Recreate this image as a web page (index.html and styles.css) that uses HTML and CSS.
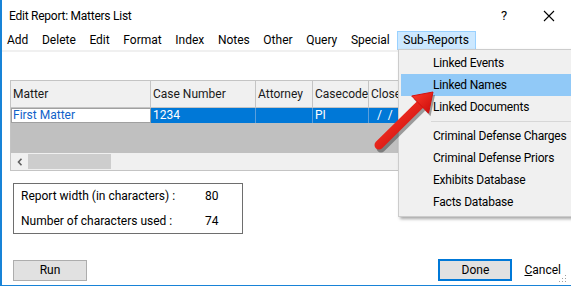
FILE: index.html
```html
<!DOCTYPE html>
<html>
<head>
<meta charset="utf-8">
<link rel="stylesheet" href="styles.css">
</head>
<body>
<div class="window">
  <div class="titlebar">
    <span class="title">Edit Report: Matters List</span>
    <span class="tb-help">?</span>
    <span class="tb-close">
      <svg width="12" height="12" viewBox="0 0 12 12"><path d="M1 1 L11 11 M11 1 L1 11" stroke="#000" stroke-width="1.1" fill="none"/></svg>
    </span>
  </div>
  <div class="menubar">
    <span class="mi mi-add">Add</span>
    <span class="mi">Delete</span>
    <span class="mi">Edit</span>
    <span class="mi">Format</span>
    <span class="mi">Index</span>
    <span class="mi">Notes</span>
    <span class="mi">Other</span>
    <span class="mi">Query</span>
    <span class="mi">Special</span>
    <span class="mi mi-open">Sub-Reports</span>
  </div>
  <div class="menusep"></div>

  <div class="grid">
    <div class="grow ghead">
      <div class="c c1">Matter</div>
      <div class="c c2">Case Number</div>
      <div class="c c3">Attorney</div>
      <div class="c c4">Casecode</div>
      <div class="c c5">Close</div>
    </div>
    <div class="grow gdata">
      <div class="c c1 cur">First Matter</div>
      <div class="c c2 sel">1234</div>
      <div class="c c3 sel"></div>
      <div class="c c4 sel">PI</div>
      <div class="c c5 sel">&nbsp;&nbsp;/&nbsp;&nbsp;/</div>
    </div>
    <div class="gempty"></div>
    <div class="hscroll">
      <span class="sarrow">
        <svg width="6" height="8" viewBox="0 0 6 8"><path d="M4.5 0.8 L1.5 4 L4.5 7.2" stroke="#606060" stroke-width="1.6" fill="none"/></svg>
      </span>
      <span class="thumb"></span>
    </div>
  </div>

  <div class="info">
    <div class="irow"><span class="ilabel">Report width (in characters) :</span><span class="ival">80</span></div>
    <div class="irow"><span class="ilabel">Number of characters used :</span><span class="ival">74</span></div>
  </div>

  <div class="buttons">
    <button class="btn">Run</button>
    <span class="spacer"></span>
    <button class="btn btn-default">Done</button>
    <span class="cancel"><u>C</u>ancel</span>
  </div>
  <span class="grip">
    <svg width="8" height="8" viewBox="0 0 8 8" fill="#a0a0a0"><rect x="6" y="0" width="1" height="1"/><rect x="3" y="3" width="1" height="1"/><rect x="6" y="3" width="1" height="1"/><rect x="0" y="6" width="1" height="1"/><rect x="3" y="6" width="1" height="1"/><rect x="6" y="6" width="1" height="1"/></svg>
  </span>

  <div class="popup">
    <div class="pi">Linked Events</div>
    <div class="pi hot">Linked Names</div>
    <div class="pi">Linked Documents</div>
    <div class="psep"></div>
    <div class="pi">Criminal Defense Charges</div>
    <div class="pi">Criminal Defense Priors</div>
    <div class="pi">Exhibits Database</div>
    <div class="pi">Facts Database</div>
  </div>

  <svg class="arrow" width="571" height="286" viewBox="0 0 571 286">
    <defs>
      <linearGradient id="rg" x1="0" y1="0" x2="1" y2="1">
        <stop offset="0" stop-color="#ff3b2a"/>
        <stop offset="1" stop-color="#c80a0a"/>
      </linearGradient>
    </defs>
    <g opacity="0.35" transform="translate(2,3)">
      <line x1="379" y1="145" x2="420" y2="104.6" stroke="#000" stroke-width="9" stroke-linecap="round"/>
      <polygon points="433,92 428.5,113.2 411.7,96" fill="#000"/>
    </g>
    <line x1="379" y1="145" x2="420" y2="104.6" stroke="url(#rg)" stroke-width="9" stroke-linecap="round"/>
    <polygon points="433,92 428.5,113.2 411.7,96" fill="url(#rg)" stroke="#d41010" stroke-width="1" stroke-linejoin="round"/>
  </svg>
</div>
</body>
</html>
```

FILE: styles.css
```css
* { box-sizing: border-box; }
html, body {
  margin: 0;
  padding: 0;
  width: 571px;
  height: 286px;
  overflow: hidden;
  background: #ffffff;
}
body {
  font-family: Roboto, "Noto Sans", sans-serif;
  font-size: 12px;
  color: #000;
}
.window {
  position: relative;
  width: 571px;
  height: 286px;
  border-left: 2px solid #1883d7;
  border-bottom: 1px solid #1883d7;
  background: #fff;
  display: flex;
  flex-direction: column;
}
.titlebar {
  height: 31px;
  display: flex;
  align-items: center;
  padding-left: 7px;
}
.title {
  flex: 1;
  font-size: 12px;
  letter-spacing: -0.25px;
}
.tb-help {
  width: 14px;
  font-size: 13px;
  margin-right: 28px;
}
.tb-close {
  width: 12px;
  margin-right: 16px;
  display: flex;
}
.menubar {
  height: 19px;
  display: flex;
  align-items: center;
  padding-left: 4px;
}
.mi {
  padding: 0 5.8px;
  height: 19px;
  line-height: 17px;
  white-space: nowrap;
  border: 1px solid transparent;
}
.mi-add { padding-left: 0; }
.mi-open {
  background: #cce8ff;
  border-color: #99d1ff;
}
.menusep {
  height: 2px;
  background: #f0f0f0;
}
.grid {
  margin-top: 28px;
  margin-left: 8px;
  width: 551px;
  border: 1px solid #c4c4c4;
  font-size: 12px;
}
.grow {
  display: flex;
}
.c {
  white-space: nowrap;
  padding-left: 2px;
}
.c1 { width: 140px; }
.c2 { width: 105px; }
.c3 { width: 57px; }
.c4 { width: 56px; }
.c5 { flex: 1; }
.ghead {
  height: 27px;
  background: #f0f0f0;
  border-bottom: 1px solid #c4c4c4;
}
.ghead .c {
  line-height: 27px;
  border-right: 1px solid #c4c4c4;
  color: #1a1a1a;
}
.gdata {
  height: 15px;
}
.gdata .c {
  line-height: 15px;
  height: 15px;
}
.cur {
  background: #fff;
  color: #0f62c9;
  border: 1px solid #a0a0a0;
  line-height: 13px !important;
  padding-left: 1px;
}
.sel {
  background: #0078d7;
  color: #fff;
  border-right: 1px solid #5a9fdc;
}
.gempty {
  height: 30px;
  background: #c0c0c0;
}
.hscroll {
  height: 17px;
  background: #f0f0f0;
  display: flex;
  align-items: center;
}
.sarrow {
  width: 17px;
  display: flex;
  justify-content: center;
}
.thumb {
  width: 83px;
  height: 15px;
  background: #cdcdcd;
}
.info {
  margin-top: 12px;
  margin-left: 11px;
  width: 230px;
  height: 51px;
  border: 1px solid #6e6e6e;
  padding-top: 4px;
  padding-left: 7px;
}
.irow {
  display: flex;
  height: 25px;
  line-height: 17px;
}
.ilabel { width: 184px; }
.buttons {
  margin-top: 25px;
  margin-left: 11px;
  display: flex;
  align-items: center;
}
.btn {
  width: 74px;
  height: 21px;
  background: #e1e1e1;
  border: 1px solid #adadad;
  font-family: inherit;
  font-size: 12px;
  padding: 0;
  color: #000;
}
.spacer { flex: 1; }
.btn-default {
  width: 74px;
  height: 22px;
  border: 2px solid #0078d7;
}
.cancel {
  margin-left: 12px;
  margin-right: 10px;
}
.grip {
  position: absolute;
  right: 4px;
  bottom: 2px;
  display: flex;
}
.popup {
  position: absolute;
  left: 396px;
  top: 49px;
  width: 190px;
  height: 168px;
  background: #f0f0f0;
  border: 1px solid #cccccc;
  box-shadow: 2px 2px 3px rgba(0,0,0,0.35);
  padding: 2px 0 0 2px;
  letter-spacing: -0.2px;
}
.pi {
  height: 22px;
  line-height: 22px;
  padding-left: 32px;
  white-space: nowrap;
}
.pi.hot {
  background: #91c9f7;
}
.psep {
  height: 7px;
  margin-left: 30px;
  display: flex;
  align-items: center;
}
.psep::after {
  content: "";
  display: block;
  width: 100%;
  height: 1px;
  background: #d7d7d7;
}
.arrow {
  position: absolute;
  left: -2px;
  top: 0;
  pointer-events: none;
}
```
